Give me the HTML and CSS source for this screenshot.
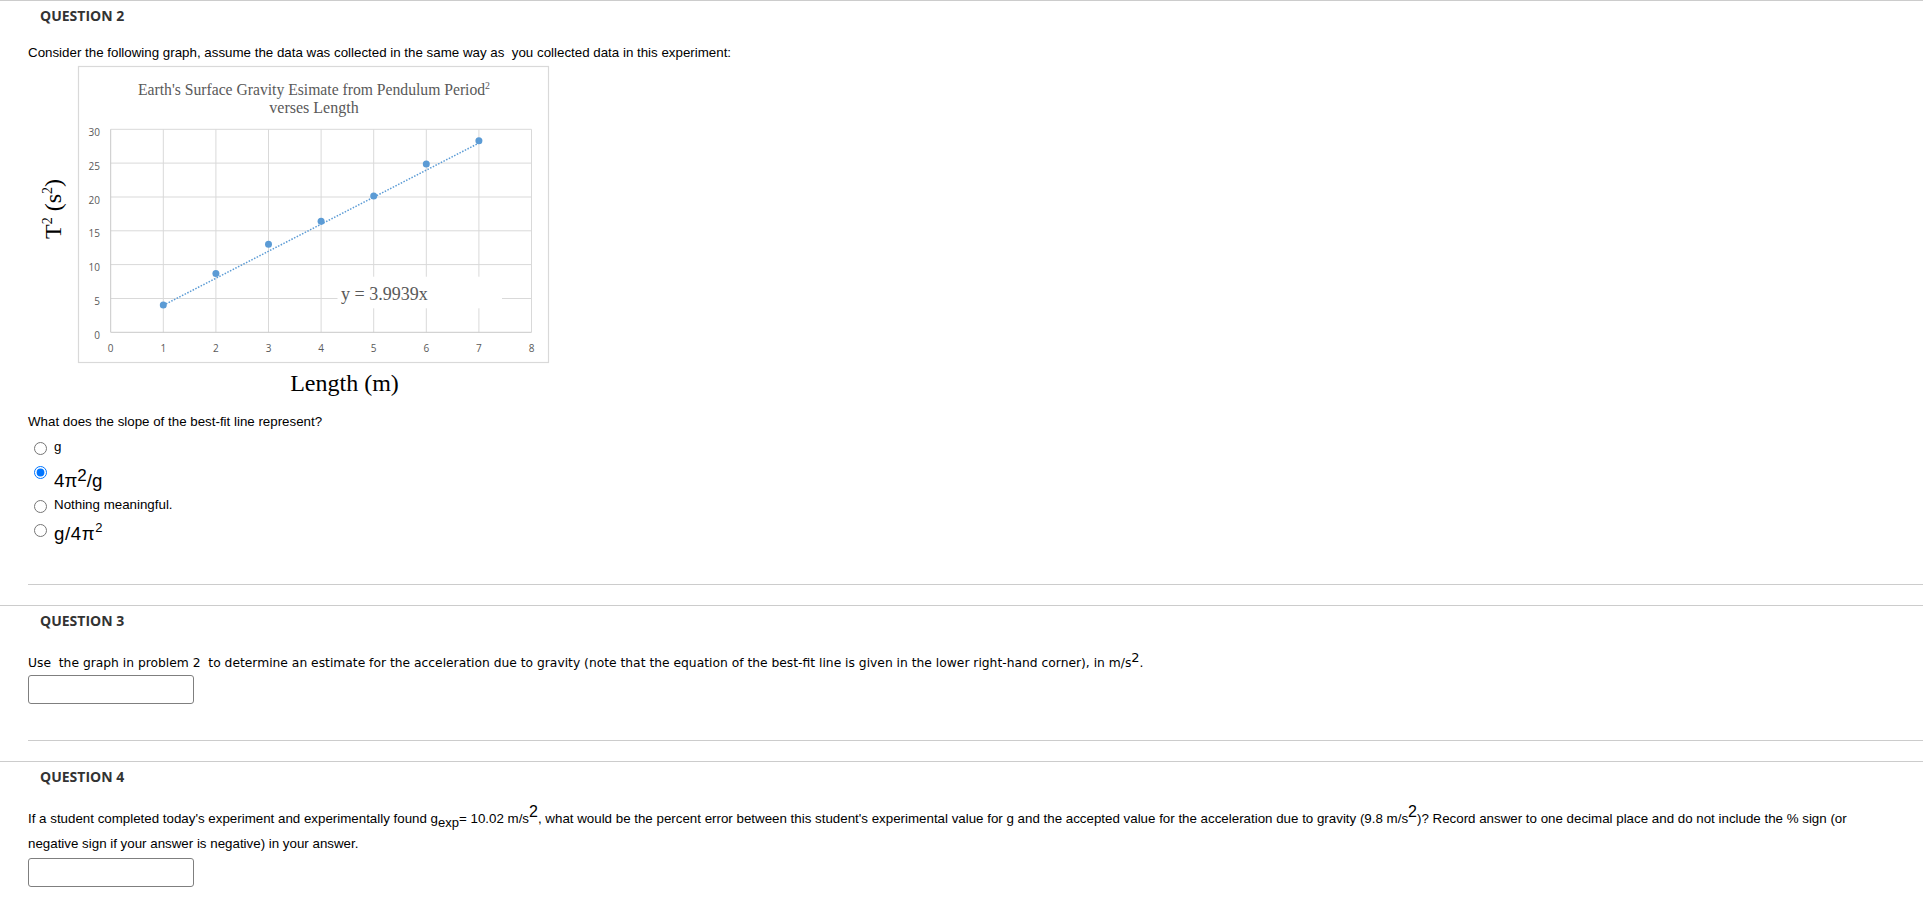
FILE: index.html
```html
<!DOCTYPE html>
<html>
<head>
<meta charset="utf-8">
<title>Questions</title>
<link rel="stylesheet" href="styles.css">
</head>
<body>
<div class="question">
  <h2 class="qtitle">QUESTION 2</h2>
  <div class="qbody qbody-2">
    <p class="txt consider">Consider the following graph, assume the data was collected in the same way as&nbsp; you collected data in this experiment:</p>
    <svg class="chart" width="525" height="338" viewBox="0 0 525 338" xmlns="http://www.w3.org/2000/svg">
      <rect x="50.5" y="4.5" width="470" height="296" fill="#fff" stroke="#d9d9d9" stroke-width="1.2"/>
      <g font-family="'Liberation Serif', serif" fill="#595959" font-size="16" text-anchor="middle">
        <text x="286" y="33" textLength="352" lengthAdjust="spacingAndGlyphs">Earth's Surface Gravity Esimate from Pendulum Period<tspan font-size="10" dy="-6">2</tspan></text>
        <text x="286" y="51">verses Length</text>
      </g>
      <g stroke="#d9d9d9" stroke-width="1">
        <line x1="82.7" y1="236.5" x2="503.5" y2="236.5"/>
        <line x1="82.7" y1="202.6" x2="503.5" y2="202.6"/>
        <line x1="82.7" y1="168.8" x2="503.5" y2="168.8"/>
        <line x1="82.7" y1="135" x2="503.5" y2="135"/>
        <line x1="82.7" y1="101.1" x2="503.5" y2="101.1"/>
        <line x1="82.7" y1="67.3" x2="503.5" y2="67.3"/>
        <line x1="135.3" y1="67.3" x2="135.3" y2="270.3"/>
        <line x1="187.9" y1="67.3" x2="187.9" y2="270.3"/>
        <line x1="240.5" y1="67.3" x2="240.5" y2="270.3"/>
        <line x1="293.1" y1="67.3" x2="293.1" y2="270.3"/>
        <line x1="345.7" y1="67.3" x2="345.7" y2="270.3"/>
        <line x1="398.3" y1="67.3" x2="398.3" y2="270.3"/>
        <line x1="450.9" y1="67.3" x2="450.9" y2="270.3"/>
        <line x1="503.5" y1="67.3" x2="503.5" y2="270.3"/>
      </g>
      <g stroke="#c8c8c8" stroke-width="1">
        <line x1="82.7" y1="67.3" x2="82.7" y2="270.3"/>
        <line x1="82.7" y1="270.3" x2="503.5" y2="270.3"/>
      </g>
      <g font-family="'Open Sans', sans-serif" font-size="10" fill="#595959" text-anchor="end">
        <text x="72" y="73.8">30</text>
        <text x="72" y="107.6">25</text>
        <text x="72" y="141.5">20</text>
        <text x="72" y="175.3">15</text>
        <text x="72" y="209.1">10</text>
        <text x="72" y="243">5</text>
        <text x="72" y="276.8">0</text>
      </g>
      <g font-family="'Open Sans', sans-serif" font-size="10" fill="#595959" text-anchor="middle">
        <text x="82.7" y="289.5">0</text>
        <text x="135.3" y="289.5">1</text>
        <text x="187.9" y="289.5">2</text>
        <text x="240.5" y="289.5">3</text>
        <text x="293.1" y="289.5">4</text>
        <text x="345.7" y="289.5">5</text>
        <text x="398.3" y="289.5">6</text>
        <text x="450.9" y="289.5">7</text>
        <text x="503.5" y="289.5">8</text>
      </g>
      <line x1="135.3" y1="243.3" x2="450.9" y2="81.1" stroke="#5b9bd5" stroke-width="1.5" stroke-dasharray="1.5 1.5"/>
      <g fill="#5b9bd5">
        <circle cx="135.3" cy="243" r="3.5"/>
        <circle cx="187.9" cy="211.4" r="3.5"/>
        <circle cx="240.5" cy="182.3" r="3.5"/>
        <circle cx="293.1" cy="159.3" r="3.5"/>
        <circle cx="345.7" cy="134" r="3.5"/>
        <circle cx="398.3" cy="102" r="3.5"/>
        <circle cx="450.9" cy="78.7" r="3.5"/>
      </g>
      <rect x="309.5" y="214.7" width="164.5" height="31.6" fill="#fff"/>
      <text x="313" y="238" font-family="'Liberation Serif', serif" font-size="18" fill="#595959">y = 3.9939x</text>
      <text transform="translate(33,147) rotate(-90)" text-anchor="middle" font-family="'Liberation Serif', serif" font-size="24" fill="#000">T<tspan font-size="14" dy="-9">2</tspan><tspan dy="9"> (s</tspan><tspan font-size="14" dy="-9">2</tspan><tspan dy="9">)</tspan></text>
      <text x="316.5" y="329" text-anchor="middle" font-family="'Liberation Serif', serif" font-size="24" fill="#000">Length (m)</text>
    </svg>
    <p class="txt prompt">What does the slope of the best-fit line represent?</p>
    <div class="choices">
      <label class="choice c1"><input type="radio" name="q2" class="radio"><span class="ctext">g</span></label>
      <label class="choice c2"><input type="radio" name="q2" class="radio" checked><span class="ctext big">4π<sup class="sup-big">2</sup>/g</span></label>
      <label class="choice c3"><input type="radio" name="q2" class="radio"><span class="ctext">Nothing meaningful.</span></label>
      <label class="choice c4"><input type="radio" name="q2" class="radio"><span class="ctext big wide">g/4π<sup class="sup-sm">2</sup></span></label>
    </div>
  </div>
</div>

<div class="question">
  <h2 class="qtitle">QUESTION 3</h2>
  <div class="qbody qbody-3">
    <p class="txt3">Use&nbsp; the graph in problem 2&nbsp; to determine an estimate for the acceleration due to gravity (note that the equation of the best-fit line is given in the lower right-hand corner), in m/s<sup class="sup3">2</sup>.</p>
    <input type="text" class="answer">
  </div>
</div>

<div class="question">
  <h2 class="qtitle">QUESTION 4</h2>
  <div class="qbody qbody-4">
    <p class="txt4">If a student completed today's experiment and experimentally found g<sub class="sub4">exp</sub>= 10.02 m/s<sup class="sup4">2</sup>, what would be the percent error between this student's experimental value for g and the accepted value for the acceleration due to gravity (9.8 m/s<sup class="sup4">2</sup>)? Record answer to one decimal place and do not include the % sign (or negative sign if your answer is negative) in your answer.</p>
    <input type="text" class="answer">
  </div>
</div>
</body>
</html>
```

FILE: styles.css
```css
html, body {
  margin: 0;
  padding: 0;
  background: #fff;
}
body {
  font-family: "Liberation Sans", Arial, sans-serif;
  font-size: 13.33px;
  color: #000;
  overflow: hidden;
}
.question {
  border-top: 1px solid #cccccc;
  margin-top: 20px;
}
.question:first-child {
  margin-top: 0;
}
.qtitle {
  margin: 0;
  padding: 5px 0 0 40px;
  font-family: "Open Sans", sans-serif;
  font-weight: 700;
  font-size: 14px;
  line-height: 20px;
  color: #333;
}
.qbody {
  margin-left: 28px;
  border-bottom: 1px solid #cccccc;
}
.txt {
  margin: 0;
  line-height: 16px;
}
.consider {
  margin-top: 19px;
}
.chart {
  display: block;
  margin-top: 1px;
}
.prompt {
  margin-top: 14px;
}
.choices {
  display: flex;
  flex-direction: column;
  margin-top: 9px;
}
.choice {
  display: flex;
  align-items: flex-start;
}
.c1 { height: 22px; }
.c2 { height: 34px; }
.c3 { height: 24px; }
.c4 { height: 28px; }
.radio {
  width: 13px;
  height: 13px;
  margin: 4.5px 7px 0 6px;
  flex: none;
}
.c1 .radio { margin-top: 2.5px; }
.ctext {
  line-height: 16px;
  margin-top: 2.4px;
}
.c1 .ctext { margin-top: 0; }
.ctext.big {
  font-size: 18.67px;
  line-height: 24px;
}
.ctext.wide {
  letter-spacing: 0.6px;
}
.c2 .ctext { margin-top: 7.5px; }
.c4 .ctext { margin-top: 2.5px; }
.sup-big {
  font-size: 17px;
  line-height: 0;
  vertical-align: 6px;
}
.sup-sm {
  font-size: 13px;
  line-height: 0;
  vertical-align: 8px;
}
.qbody-2 {
  padding-bottom: 37px;
}
.txt3 {
  margin: 23.5px 0 0 0;
  font-family: "DejaVu Sans", sans-serif;
  font-size: 12.3px;
  line-height: 16px;
}
.sup3 {
  font-size: 13px;
  line-height: 0;
  vertical-align: 5px;
}
.answer {
  display: block;
  box-sizing: border-box;
  width: 166px;
  height: 29px;
  margin: 4.5px 0 0 0;
  border: 1px solid #7f7f7f;
  border-radius: 3px;
  background: #fff;
  padding: 0 4px;
}
.qbody-3 {
  padding-bottom: 36px;
}
.txt4 {
  margin: 19px 0 0 0;
  padding-right: 50px;
  line-height: 25px;
}
.sub4 {
  font-size: 13px;
  line-height: 0;
  vertical-align: -4px;
}
.sup4 {
  font-size: 16px;
  line-height: 0;
  vertical-align: 6px;
}
.qbody-4 {
  border-bottom: none;
  padding-bottom: 10px;
}
.qbody-4 .answer {
  margin-top: 2px;
}
```
